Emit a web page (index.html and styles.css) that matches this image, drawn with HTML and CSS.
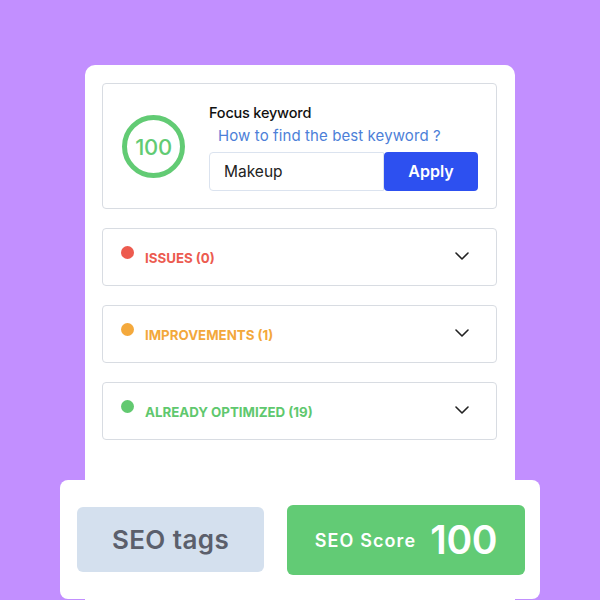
FILE: index.html
```html
<!DOCTYPE html>
<html>
<head>
<meta charset="utf-8">
<link rel="stylesheet" href="styles.css">
</head>
<body>
<div class="stage">
  <div class="card">
    <div class="keyword-box">
      <div class="score-ring">100</div>
      <div class="kw-col">
        <div class="kw-title">Focus keyword</div>
        <div class="kw-link">How to find the best keyword ?</div>
        <div class="kw-form">
          <div class="kw-input">Makeup</div>
          <div class="kw-apply">Apply</div>
        </div>
      </div>
    </div>
    <div class="row">
      <span class="dot dot-red"></span>
      <span class="row-label red">ISSUES (0)</span>
      <svg class="chev" viewBox="0 0 14 8" width="14" height="8"><path d="M1 1l6 6 6-6" fill="none" stroke="#222" stroke-width="1.6" stroke-linecap="round" stroke-linejoin="round"/></svg>
    </div>
    <div class="row">
      <span class="dot dot-orange"></span>
      <span class="row-label orange">IMPROVEMENTS (1)</span>
      <svg class="chev" viewBox="0 0 14 8" width="14" height="8"><path d="M1 1l6 6 6-6" fill="none" stroke="#222" stroke-width="1.6" stroke-linecap="round" stroke-linejoin="round"/></svg>
    </div>
    <div class="row">
      <span class="dot dot-green"></span>
      <span class="row-label green">ALREADY OPTIMIZED (19)</span>
      <svg class="chev" viewBox="0 0 14 8" width="14" height="8"><path d="M1 1l6 6 6-6" fill="none" stroke="#222" stroke-width="1.6" stroke-linecap="round" stroke-linejoin="round"/></svg>
    </div>
  </div>
  <div class="footer">
    <div class="tags-btn">SEO tags</div>
    <div class="score-btn"><span class="score-label">SEO Score</span><span class="score-num">100</span></div>
  </div>
</div>
</body>
</html>
```
FILE: styles.css
```css
html, body {
  margin: 0;
  padding: 0;
}
body {
  width: 600px;
  height: 600px;
  overflow: hidden;
  background: #c28fff;
  font-family: Inter, "Noto Sans", sans-serif;
}
.stage {
  display: flex;
  flex-direction: column;
  align-items: flex-start;
  padding-top: 65px;
}
.card {
  box-sizing: border-box;
  margin-left: 85px;
  width: 430px;
  height: 545px;
  background: #fff;
  border-radius: 10px;
  padding: 18px 18px 0 17px;
  display: flex;
  flex-direction: column;
  gap: 19px;
}
.keyword-box {
  box-sizing: border-box;
  height: 126px;
  border: 1px solid #d8dce2;
  border-radius: 4px;
  display: flex;
  align-items: center;
  padding: 1px 0 0 19px;
  gap: 24px;
}
.score-ring {
  box-sizing: border-box;
  width: 63px;
  height: 63px;
  border: 5px solid #62cb74;
  border-radius: 50%;
  display: flex;
  align-items: center;
  justify-content: center;
  color: #62cb74;
  font-size: 22px;
  font-weight: 500;
  letter-spacing: -0.3px;
}
.kw-col {
  display: flex;
  flex-direction: column;
}
.kw-title {
  font-size: 14.5px;
  color: #111;
  line-height: 20px;
  font-weight: 500;
  letter-spacing: -0.2px;
}
.kw-link {
  margin-left: 9px;
  margin-top: 3px;
  font-size: 15px;
  line-height: 20px;
  color: #4d7fd8;
  letter-spacing: 0.1px;
}
.kw-form {
  display: flex;
  margin-top: 6px;
}
.kw-input {
  box-sizing: border-box;
  width: 175px;
  height: 39px;
  border: 1px solid #dbe3ef;
  border-radius: 4px 0 0 4px;
  padding-left: 14px;
  display: flex;
  align-items: center;
  font-size: 15.5px;
  color: #222;
}
.kw-apply {
  box-sizing: border-box;
  width: 94px;
  height: 39px;
  background: #2d50f0;
  border-radius: 4px;
  color: #fff;
  font-size: 16px;
  font-weight: 600;
  display: flex;
  align-items: center;
  justify-content: center;
}
.row {
  box-sizing: border-box;
  height: 58px;
  border: 1px solid #d8dce2;
  border-radius: 4px;
  display: flex;
  align-items: center;
  padding: 0 27px 0 18px;
}
.dot {
  width: 13px;
  height: 13px;
  border-radius: 50%;
  margin-top: -10px;
  margin-right: 11px;
  flex: none;
}
.dot-red { background: #ed5b4f; }
.dot-orange { background: #f4a93c; }
.dot-green { background: #62c970; }
.row-label {
  flex: 1;
  font-size: 13.3px;
  font-weight: 700;
  letter-spacing: 0;
  padding-top: 1px;
}
.red { color: #ec5b50; }
.orange { color: #f3a83b; }
.green { color: #5fc86e; }
.chev {
  flex: none;
  margin-top: -2px;
}
.footer {
  box-sizing: border-box;
  position: relative;
  margin-top: -130px;
  margin-left: 60px;
  width: 480px;
  height: 119px;
  background: #fff;
  border-radius: 8px;
  display: flex;
  align-items: center;
  padding: 0 15px 0 17px;
  gap: 23px;
}
.tags-btn {
  box-sizing: border-box;
  width: 187px;
  height: 65px;
  background: #d4e0ee;
  border-radius: 6px;
  display: flex;
  align-items: center;
  justify-content: center;
  font-size: 26px;
  font-weight: 600;
  color: #5b5f6b;
  letter-spacing: 0.4px;
}
.score-btn {
  box-sizing: border-box;
  width: 238px;
  height: 70px;
  background: #62cb75;
  border-radius: 6px;
  display: flex;
  align-items: center;
  justify-content: center;
  gap: 14px;
  color: #fff;
}
.score-label {
  font-size: 18px;
  font-weight: 600;
  letter-spacing: 1.1px;
  margin-top: 2px;
}
.score-num {
  font-size: 39px;
  font-weight: 600;
  letter-spacing: -0.3px;
}
```
